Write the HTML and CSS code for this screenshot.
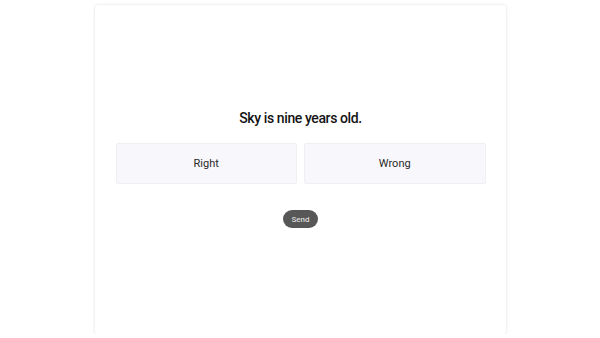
FILE: index.html
```html
<!DOCTYPE html>
<html lang="en">
  <head>
    <meta charset="UTF-8" />
    <meta name="viewport" content="width=device-width, initial-scale=1.0" />
    <title>Quiz</title>
    <link rel="stylesheet" href="styles.css">
  </head>
  <body>
    <main class="card">
      <h1 class="question">Sky is nine years old.</h1>
      <ul class="answer-list">
        <li class="answer-list-item"><button class="answer">Right</button></li>
        <li class="answer-list-item"><button class="answer">Wrong</button></li>
      </ul>
      <button class="send">Send</button>
    </main>
  </body>
</html>
```

FILE: styles.css
```css
* {
  padding: 0;
  margin: 0;
  box-sizing: border-box;
}

body {
  font-family: Roboto, "Liberation Sans", sans-serif;
  font-size: 11px;
  color: #1f1f1f;
  background-color: #fff;
  padding-top: 5px;
}

ul {
  list-style: none;
}

button {
  font-family: inherit;
  cursor: pointer;
}

.card {
  display: flex;
  flex-direction: column;
  align-items: center;
  width: 411px;
  height: 329px;
  margin: 0 auto;
  padding: 102px 20px 0 21px;
  background: #fff;
  border-radius: 3px;
  box-shadow: 0 0 3px rgba(0, 0, 0, 0.14);
}

.question {
  font-size: 14px;
  font-weight: 500;
  line-height: 22px;
  letter-spacing: -0.4px;
  color: #141414;
}

.answer-list {
  display: flex;
  gap: 7px;
  width: 100%;
  margin-top: 14px;
}

.answer-list-item {
  flex: 1;
}

.answer {
  width: 100%;
  height: 41px;
  font-size: 11px;
  color: #2a2a2a;
  background: #f8f8fc;
  border: 1px solid #efeff4;
  border-radius: 2px;
}

.send {
  margin-top: 26px;
  width: 35px;
  height: 18px;
  font-size: 8px;
  font-weight: 500;
  color: #dcdcdc;
  background: #575757;
  border: none;
  border-radius: 9px;
}
```
